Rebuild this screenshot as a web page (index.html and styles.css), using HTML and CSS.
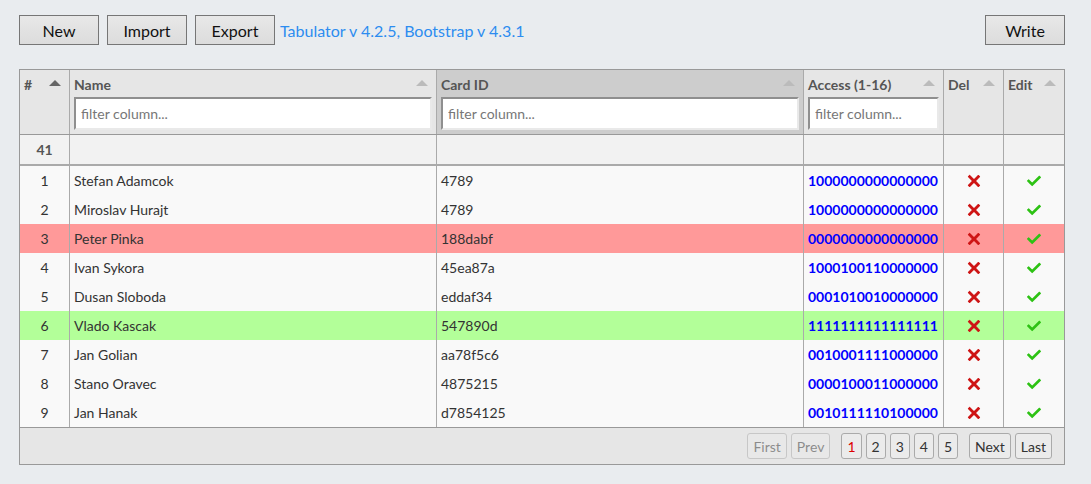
FILE: index.html
```html
<!DOCTYPE html>
<html>
<head>
<meta charset="utf-8">
<link rel="stylesheet" href="styles.css">
</head>
<body>
<div class="page">
  <div class="toolbar">
    <button class="btn">New</button>
    <button class="btn">Import</button>
    <button class="btn">Export</button>
    <span class="version">Tabulator v 4.2.5, Bootstrap v 4.3.1</span>
    <button class="btn btn-right">Write</button>
  </div>

  <div class="tabulator">
    <div class="grid header">
      <div class="hcell">
        <div class="htitle"><span>#</span><span class="arrow arrow-active"></span></div>
      </div>
      <div class="hcell">
        <div class="htitle"><span>Name</span><span class="arrow"></span></div>
        <input class="filter" placeholder="filter column...">
      </div>
      <div class="hcell hcell-sorted">
        <div class="htitle"><span>Card ID</span><span class="arrow"></span></div>
        <input class="filter" placeholder="filter column...">
      </div>
      <div class="hcell">
        <div class="htitle"><span>Access (1-16)</span><span class="arrow"></span></div>
        <input class="filter" placeholder="filter column...">
      </div>
      <div class="hcell">
        <div class="htitle"><span>Del</span><span class="arrow"></span></div>
      </div>
      <div class="hcell hcell-last">
        <div class="htitle"><span>Edit</span><span class="arrow"></span></div>
      </div>
    </div>

    <div class="grid calc">
      <div class="cell center bold">41</div>
      <div class="cell"></div>
      <div class="cell"></div>
      <div class="cell"></div>
      <div class="cell"></div>
      <div class="cell last"></div>
    </div>

    <div class="body" id="rows"></div>

    <div class="footer">
      <button class="page-btn disabled">First</button>
      <button class="page-btn disabled">Prev</button>
      <span class="pages">
        <button class="page-btn active">1</button>
        <button class="page-btn">2</button>
        <button class="page-btn">3</button>
        <button class="page-btn">4</button>
        <button class="page-btn">5</button>
      </span>
      <button class="page-btn">Next</button>
      <button class="page-btn">Last</button>
    </div>
  </div>
</div>
<script src="app.js"></script>
</body>
</html>
```
FILE: app.js
```js
var data = [
  [1, "Stefan Adamcok", "4789", "1000000000000000", ""],
  [2, "Miroslav Hurajt", "4789", "1000000000000000", ""],
  [3, "Peter Pinka", "188dabf", "0000000000000000", "red"],
  [4, "Ivan Sykora", "45ea87a", "1000100110000000", ""],
  [5, "Dusan Sloboda", "eddaf34", "0001010010000000", ""],
  [6, "Vlado Kascak", "547890d", "1111111111111111", "green"],
  [7, "Jan Golian", "aa78f5c6", "0010001111000000", ""],
  [8, "Stano Oravec", "4875215", "0000100011000000", ""],
  [9, "Jan Hanak", "d7854125", "0010111110100000", ""]
];
var cross = '<svg class="icon" viewBox="0 0 24 24"><path fill="#CE1515" d="M22.245,4.015c0.313,0.313,0.313,0.826,0,1.139l-6.276,6.27c-0.313,0.312-0.313,0.826,0,1.14l6.273,6.272c0.313,0.313,0.313,0.826,0,1.14l-2.285,2.277c-0.314,0.312-0.828,0.312-1.142,0l-6.271-6.271c-0.313-0.313-0.828-0.313-1.141,0l-6.276,6.267c-0.313,0.313-0.826,0.313-1.141,0l-2.282-2.28c-0.313-0.313-0.313-0.826,0-1.14l6.278-6.269c0.313-0.312,0.313-0.826,0-1.14L1.709,5.147c-0.314-0.313-0.314-0.827,0-1.14l2.284-2.278C4.308,1.417,4.821,1.417,5.135,1.73L11.405,8c0.314,0.314,0.828,0.314,1.141,0.001l6.276-6.267c0.312-0.312,0.826-0.312,1.141,0L22.245,4.015z"/></svg>';
var tick = '<svg class="icon" viewBox="0 0 24 24"><path fill="#2DC214" d="M21.652,3.211c-0.293-0.295-0.77-0.295-1.061,0L9.41,14.34c-0.293,0.297-0.771,0.297-1.062,0L3.449,9.351C3.304,9.203,3.114,9.13,2.923,9.129C2.73,9.128,2.534,9.201,2.387,9.351l-2.165,1.946C0.078,11.445,0,11.63,0,11.823c0,0.194,0.078,0.397,0.223,0.544l4.94,5.184c0.292,0.296,0.771,0.776,1.062,1.07l2.124,2.141c0.292,0.293,0.769,0.293,1.062,0l14.366-14.34c0.293-0.294,0.293-0.777,0-1.071L21.652,3.211z"/></svg>';
var html = "";
data.forEach(function (r) {
  html += '<div class="grid row' + (r[4] ? " row-" + r[4] : "") + '">' +
    '<div class="cell center">' + r[0] + '</div>' +
    '<div class="cell">' + r[1] + '</div>' +
    '<div class="cell">' + r[2] + '</div>' +
    '<div class="cell access">' + r[3] + '</div>' +
    '<div class="cell center">' + cross + '</div>' +
    '<div class="cell center last">' + tick + '</div>' +
    '</div>';
});
document.getElementById("rows").innerHTML = html;
```
FILE: styles.css
```css
* { box-sizing: border-box; }
html, body { margin: 0; padding: 0; }
body {
  background: #e9ecef;
  font-family: Lato, "Liberation Sans", sans-serif;
  color: #333;
}
.page {
  width: 1046px;
  margin-left: 19px;
  padding-top: 15px;
}
.toolbar {
  display: flex;
  align-items: center;
  gap: 8px;
  height: 30px;
}
.btn {
  width: 80px;
  height: 30px;
  font-family: inherit;
  font-size: 16px;
  color: #111;
  background: linear-gradient(#e8e8e8, #dcdcdc);
  border: 1px solid #767676;
  padding: 0;
  margin: 0;
}
.btn-right { margin-left: auto; }
.version {
  font-size: 16px;
  color: #2d8cf0;
  margin-left: -3px;
}
.tabulator {
  margin-top: 24px;
  border: 1px solid #999;
  background: #f9f9f9;
  font-size: 14px;
}
.grid {
  display: grid;
  grid-template-columns: 50px 367px 367px 140px 60px 1fr;
}
.header {
  background: #e6e6e6;
  border-bottom: 1px solid #999;
  color: #555;
  font-weight: bold;
}
.hcell {
  border-right: 1px solid #aaa;
  padding: 4px 4px 4px 4px;
}
.hcell-last { border-right: none; }
.hcell-sorted { background: #cdcdcd; }
.htitle {
  display: flex;
  justify-content: space-between;
  align-items: center;
  height: 21px;
  padding-right: 4px;
}
.arrow {
  width: 0;
  height: 0;
  border-left: 6px solid transparent;
  border-right: 6px solid transparent;
  border-bottom: 6px solid #bbb;
  margin-top: -3px;
}
.arrow-active { border-bottom-color: #666; }
.filter {
  display: block;
  width: 100%;
  height: 33px;
  margin-top: 2px;
  padding: 4px 5px;
  font-family: inherit;
  font-size: 14px;
  color: #333;
  background: #fff;
  border-style: solid;
  border-width: 2px;
  border-color: #8f8f8f #e9e9e9 #e9e9e9 #8f8f8f;
  outline: none;
}
.filter::placeholder { color: #777; }
.calc {
  background: #f2f2f2;
  border-bottom: 2px solid #aaa;
  font-weight: bold;
}
.calc .cell { height: 29px; }
.cell {
  border-right: 1px solid #aaa;
  padding: 0 4px;
  height: 29px;
  line-height: 29px;
  white-space: nowrap;
  overflow: hidden;
}
.cell.last { border-right: none; }
.center {
  text-align: center;
}
.bold { font-weight: bold; color: #555; }
.row { background: #f9f9f9; }
.row-red { background: #ff9999; }
.row-green { background: #b3ff99; }
.access {
  color: #0000ff;
  font-weight: bold;
}
.icon {
  width: 14px;
  height: 14px;
  vertical-align: middle;
  margin-top: -2px;
}
.footer {
  background: #e6e6e6;
  border-top: 1px solid #999;
  padding: 5px 10px;
  display: flex;
  justify-content: flex-end;
  align-items: center;
}
.pages {
  display: flex;
  margin: 0 7px;
}
.page-btn {
  margin: 0 2px;
  padding: 2px 5px;
  height: 26px;
  border: 1px solid #aaa;
  border-radius: 3px;
  background: rgba(255,255,255,0.2);
  font-family: inherit;
  font-size: 14px;
  color: #333;
}
.page-btn.disabled { opacity: 0.5; }
.page-btn.active { color: #d00; }
```
